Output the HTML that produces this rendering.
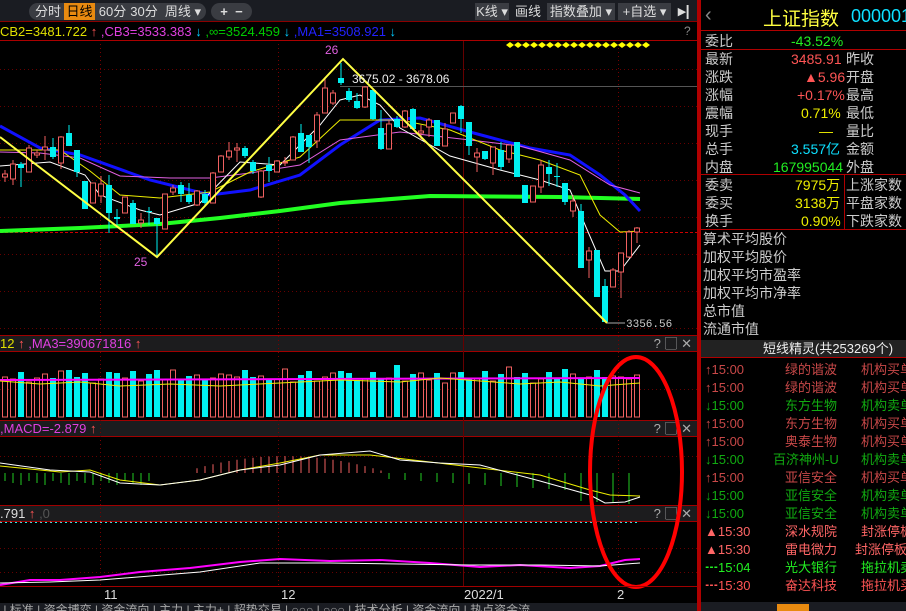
<!DOCTYPE html>
<html><head><meta charset="utf-8"><style>
*{margin:0;padding:0;box-sizing:border-box}
body{width:906px;height:611px;background:#000;overflow:hidden;position:relative;font-family:"Liberation Sans","Noto Sans CJK SC",sans-serif;color:#ccc}
.abs{position:absolute}
.tb{position:absolute;top:0;left:0;width:698px;height:22px;background:#1a1c22;border-bottom:1px solid #8b0000}
.pill{position:absolute;top:3px;height:17px;background:#3a3c42;border-radius:9px}
.t{position:absolute;top:3px;height:17px;font-size:13px;color:#ddd;line-height:17px;white-space:nowrap;text-align:center}
.rp{position:absolute;left:699px;top:0;width:207px;height:611px;border-left:2px solid #b00000;font-size:14px}
.row{position:absolute;left:4px;height:18px;line-height:18px;white-space:nowrap}
.hd{position:absolute;left:0;width:698px;height:17px;background:#1c1c1e;border-top:1px solid #a00000;border-bottom:1px solid #a00000;font-size:13px;line-height:16px}
</style></head><body>
<div class="tb">
 <div class="pill" style="left:29px;width:177px"></div>
 <div class="t" style="left:34px;width:28px">分时</div>
 <div class="t" style="left:64px;width:31px;background:#e88a10;color:#000">日线</div>
 <div class="t" style="left:97px;width:31px">60分</div>
 <div class="t" style="left:129px;width:30px">30分</div>
 <div class="t" style="left:161px;width:44px">周线 ▾</div>
 <div class="pill" style="left:211px;width:41px"></div>
 <div class="t" style="left:211px;width:41px;font-weight:bold">+&nbsp;&nbsp;−</div>
 <div class="t" style="left:475px;width:34px;background:#3a3c42">K线 ▾</div>
 <div class="t" style="left:514px;width:28px">画线</div>
 <div class="t" style="left:547px;width:68px;background:#3a3c42">指数叠加 ▾</div>
 <div class="t" style="left:618px;width:53px;background:#3a3c42">+自选 ▾</div>
 <div class="abs" style="left:678px;top:2px;font-size:15px;color:#ddd;font-weight:bold">▸|</div>
</div>
<div class="abs" style="left:0;top:24px;font-size:13px;white-space:nowrap"><span style="color:#e0e000">CB2=3481.722</span><span style="color:#f55"> ↑</span> <span style="color:#e040e0">,CB3=3533.383</span><span style="color:#0cf"> ↓</span> <span style="color:#0c0">,∞=3524.459</span><span style="color:#0cf"> ↓</span> <span style="color:#22f">,MA1=3508.921</span><span style="color:#0cf"> ↓</span></div>
<div class="abs" style="left:684px;top:24px;font-size:12px;color:#888">?</div>
<div class="hd" style="top:335px"><span style="color:#e0e000">12</span><span style="color:#f55"> ↑</span> <span style="color:#e040e0">,MA3=390671816</span><span style="color:#f55"> ↑</span><span style="position:absolute;right:6px;color:#aaa">? ▢ ✕</span></div>
<div class="hd" style="top:420px"><span style="color:#e040e0">,MACD=-2.879</span><span style="color:#f55"> ↑</span><span style="position:absolute;right:6px;color:#aaa">? ▢ ✕</span></div>
<div class="hd" style="top:505px"><span style="color:#ddd">.791</span><span style="color:#f55"> ↑</span> <span style="color:#555">,0</span><span style="position:absolute;right:6px;color:#aaa">? ▢ ✕</span></div>
<svg class="abs" style="left:0;top:0" width="698" height="611" id="sv"></svg>
<div class="abs" style="left:0;top:586px;width:698px;height:1px;background:#a00000"></div>
<div class="abs" style="left:104px;top:587px;font-size:13px;color:#ddd">11</div>
<div class="abs" style="left:281px;top:587px;font-size:13px;color:#ddd">12</div>
<div class="abs" style="left:464px;top:587px;font-size:13px;color:#ddd">2022/1</div>
<div class="abs" style="left:617px;top:587px;font-size:13px;color:#ddd">2</div>
<div class="abs" style="left:0;top:603px;width:698px;height:8px;background:#1a1c22;font-size:12px;color:#aaa;line-height:14px;white-space:nowrap;overflow:hidden">&nbsp;| 标准 | 资金博弈 | 资金流向 | 主力 | 主力+ | 超势交易 | ○○○ | ○○○ | 技术分析 | 资金流向 | 热点资金流</div>
<div class="abs" style="left:697px;top:0;width:2px;height:611px;background:#b00000"></div>
<div class="rp">
 <div class="abs" style="left:0;top:0;width:207px;height:31px;border-bottom:1px solid #b00000"></div>
 <div class="abs" style="left:4px;top:4px;font-size:20px;color:#888">‹</div>
 <div class="abs" style="left:62px;top:4px;font-size:19px;color:#ffff40">上证指数</div>
 <div class="abs" style="left:150px;top:6px;font-size:18px;color:#0de0ff">000001</div>
 <div class="row" style="top:32px;color:#ccc">委比</div><div class="row" style="top:32px;left:90px;color:#2e2">-43.52%</div>
 <div class="abs" style="left:0;top:49px;width:207px;height:1px;background:#b00000"></div>
 <div class="row" style="top:50px">最新</div><div class="row" style="top:50px;left:90px;color:#f55">3485.91</div><div class="row" style="top:50px;left:145px">昨收</div>
 <div class="row" style="top:68px">涨跌</div><div class="row" style="top:68px;left:103px;color:#f55">▲5.96</div><div class="row" style="top:68px;left:145px">开盘</div>
 <div class="row" style="top:86px">涨幅</div><div class="row" style="top:86px;left:96px;color:#f55">+0.17%</div><div class="row" style="top:86px;left:145px">最高</div>
 <div class="row" style="top:104px">震幅</div><div class="row" style="top:104px;left:100px;color:#ee0">0.71%</div><div class="row" style="top:104px;left:145px">最低</div>
 <div class="row" style="top:122px">现手</div><div class="row" style="top:122px;left:118px;color:#ee0">—</div><div class="row" style="top:122px;left:145px">量比</div>
 <div class="row" style="top:140px">总手</div><div class="row" style="top:140px;left:90px;color:#0de0ff">3.557亿</div><div class="row" style="top:140px;left:145px">金额</div>
 <div class="row" style="top:158px">内盘</div><div class="row" style="top:158px;left:72px;color:#2e2">167995044</div><div class="row" style="top:158px;left:145px">外盘</div>
 <div class="abs" style="left:0;top:174px;width:207px;height:1px;background:#b00000"></div>
 <div class="abs" style="left:143px;top:174px;width:1px;height:55px;background:#b00000"></div>
 <div class="row" style="top:176px">委卖</div><div class="row" style="top:176px;left:94px;color:#ee0">7975万</div><div class="row" style="top:176px;left:145px">上涨家数</div>
 <div class="row" style="top:194px">委买</div><div class="row" style="top:194px;left:94px;color:#ee0">3138万</div><div class="row" style="top:194px;left:145px">平盘家数</div>
 <div class="row" style="top:212px">换手</div><div class="row" style="top:212px;left:100px;color:#ee0">0.90%</div><div class="row" style="top:212px;left:145px">下跌家数</div>
 <div class="abs" style="left:0;top:229px;width:207px;height:1px;background:#b00000"></div>
 <div class="row" style="top:230px;left:2px">算术平均股价</div>
 <div class="row" style="top:248px;left:2px">加权平均股价</div>
 <div class="row" style="top:266px;left:2px">加权平均市盈率</div>
 <div class="row" style="top:284px;left:2px">加权平均市净率</div>
 <div class="row" style="top:302px;left:2px">总市值</div>
 <div class="row" style="top:320px;left:2px">流通市值</div>
 <div class="abs" style="left:0;top:340px;width:207px;height:18px;background:#222;border-bottom:1px solid #b00000;color:#eee;font-size:13px;line-height:18px;padding-left:62px">短线精灵(共253269个)</div>
 <div id="lst"></div>
 <div class="abs" style="left:0;top:602px;width:207px;height:9px;background:#1a1c22"></div>
 <div class="abs" style="left:76px;top:604px;width:32px;height:7px;background:#e88a10"></div>
</div>
<script>
var C=[[5,174,177,170,182,1],[13,164,179,160,185,1],[21,164,168,162,187,0],[29,148,172,145,172,1],[37,153,155,150,158,1],[45,147,150,136,160,1],[53,147,157,138,159,0],[61,137,163,136,169,1],[69,133,146,125,146,0],[77,150,172,150,177,0],[85,181,209,181,209,0],[93,183,203,183,203,1],[101,184,196,176,203,1],[109,185,213,175,233,0],[117,217,219,209,227,0],[125,197,213,197,213,1],[133,203,224,200,224,0],[141,220,223,213,228,1],[149,211,212,207,225,0],[157,218,224,218,258,0],[165,194,229,194,229,1],[173,188,192,185,195,1],[181,185,194,182,202,0],[189,195,202,183,204,0],[197,191,205,190,206,1],[205,194,203,190,205,0],[213,173,203,172,203,1],[221,156,172,155,172,1],[229,151,157,142,160,1],[237,148,150,143,162,1],[245,148,156,146,158,0],[253,162,171,160,174,0],[261,171,197,170,198,1],[269,165,171,157,182,0],[277,161,172,160,172,1],[285,162,163,157,166,1],[293,137,160,136,160,1],[301,133,152,124,152,0],[309,135,147,135,163,0],[317,115,141,112,148,1],[325,88,113,77,113,1],[333,93,103,90,105,1],[341,78,83,63,85,0],[349,91,100,88,102,0],[357,101,108,93,109,0],[365,87,107,86,108,1],[373,90,119,88,120,0],[381,128,149,110,150,0],[389,124,149,120,149,1],[397,119,127,116,128,0],[405,111,127,110,128,1],[413,109,129,108,130,0],[421,131,133,125,140,1],[429,120,127,118,137,1],[437,120,146,120,146,0],[445,129,146,123,146,1],[453,113,123,113,123,1],[461,106,119,105,133,0],[469,122,146,122,155,0],[477,153,157,148,172,1],[485,151,159,151,160,0],[493,147,163,147,175,1],[501,150,167,142,170,0],[509,145,159,145,163,1],[517,142,177,142,177,0],[525,185,203,185,203,0],[533,186,202,186,202,1],[541,165,187,160,193,1],[549,167,174,160,186,0],[557,176,177,163,187,0],[565,183,202,183,205,0],[573,201,211,195,217,1],[581,211,268,204,268,0],[589,251,260,247,278,1],[597,250,297,250,297,0],[605,286,322,279,322,0],[613,270,287,268,287,1],[621,253,272,253,298,1],[629,232,257,230,258,1],[637,228,232,227,243,1]];
var s='';
function L(x1,y1,x2,y2,c,w,d){s+='<line x1="'+x1+'" y1="'+y1+'" x2="'+x2+'" y2="'+y2+'" stroke="'+c+'" stroke-width="'+(w||1)+'"'+(d?' stroke-dasharray="'+d+'"':'')+'/>';}
function P(p,c,w){s+='<polyline fill="none" stroke="'+c+'" stroke-width="'+w+'" points="'+p+'"/>';}
[100,278,618].forEach(function(x){L(x+.5,40,x+.5,586,'#700','1','1,3');});
L(463.5,40,463.5,586,'#600',1);
for(var y=69;y<330;y+=37)L(0,y+.5,697,y+.5,'#600',1,'1,3');
L(0,40.5,697,40.5,'#a00',1);
L(0,232.5,697,232.5,'#c00',1,'3,2');
[389,456,548,572].forEach(function(y){L(0,y+.5,697,y+.5,'#600',1,'1,3');});
L(340,86.5,697,86.5,'#555',1);
P('0,231 80,228 160,224 220,218 280,211 340,203 430,196 560,197 640,199','#2f2',4);
P('0,126 40,148 80,155 150,180 210,195 250,190 300,175 340,145 380,120 420,118 470,132 530,148 570,155 600,175 625,195 640,211','#11f',3);
P('0,152 40,153 80,158 120,176 170,178 210,178 250,173 300,165 340,140 400,132 470,140 520,146 570,160 610,185 640,193','#e060e0',1);
P('0,150 60,150 90,171 120,195 160,198 210,192 250,172 300,157 340,120 400,120 450,130 500,150 540,160 580,175 600,215 620,232 640,231','#ee0',1);
P('0,166 50,162 85,175 100,195 140,210 160,215 200,203 240,162 280,165 320,125 340,100 360,95 380,105 400,128 450,156 500,170 540,180 570,190 595,248 605,271 620,271 640,245','#fff',1);
C.forEach(function(c){var x=c[0],col=c[5]?'#f06060':'#00f0f0';L(x,c[3],x,c[4],col,1);
 var t=Math.min(c[1],c[2]),h=Math.max(1,Math.abs(c[2]-c[1]));
 if(c[5])s+='<rect x="'+(x-2.5)+'" y="'+t+'" width="5" height="'+h+'" fill="#000" stroke="'+col+'"/>';
 else s+='<rect x="'+(x-3)+'" y="'+t+'" width="6" height="'+h+'" fill="'+col+'"/>';});
P('0,137 157,257 343,59 607,323','#ff4',2);
L(607,323,625,323,'#aaa',1);
s+='<text x="626" y="327" fill="#ccc" font-size="11" font-family="Liberation Mono">3356.56</text>';
s+='<text x="134" y="266" fill="#e060e0" font-size="12" font-family="Liberation Sans">25</text>';
s+='<text x="325" y="54" fill="#e060e0" font-size="12" font-family="Liberation Sans">26</text>';
s+='<text x="352" y="83" fill="#eee" font-size="12" font-family="Liberation Sans">3675.02 - 3678.06</text>';
for(var i=0;i<18;i++){var dx=510+i*8;s+='<polygon points="'+dx+',42 '+(dx+4)+',45 '+dx+',48 '+(dx-4)+',45" fill="#ff0"/>';}
C.forEach(function(c,i){var h=34+((i*37)%11)+(c[5]?0:3)+(i%7==0?6:0);var col=c[5]?'#f06060':'#00f0f0';
 if(c[5])s+='<rect x="'+(c[0]-2.5)+'" y="'+(417-h)+'" width="5" height="'+h+'" fill="#000" stroke="'+col+'"/>';
 else s+='<rect x="'+(c[0]-3)+'" y="'+(417-h)+'" width="6" height="'+h+'" fill="'+col+'"/>';});
P('0,380 640,378','#f0f',2);
P('0,381 40,384 80,382 120,386 170,384 220,386 280,383 340,380 400,382 440,378 480,381 520,384 560,382 600,386 640,383','#ee0',1);
for(var i=0;i<80;i++){var x=5+8*i;var v;
 if(i<22)v=-8-(i%3)*2;else if(i<48)v=((i-22)*(48-i))/10;else v=-6-(i-48)*0.5-(i>70?10:0);
 if(i>18&&i<24)continue; if(i>=48&&i%2==1)continue;
 var col=v>0?'#f06060':'#2c2';L(x,473,x,473-v,col,1);}
P('0,466 60,472 90,470 120,480 160,485 200,480 240,470 280,463 320,455 370,455 430,462 480,468 540,475 590,490 610,495 640,496','#ee0',1);
P('0,463 50,470 90,472 120,483 160,485 200,480 240,470 280,465 320,455 370,451 400,460 440,463 480,465 540,481 590,495 605,503 625,502 640,497','#fff',1);
L(0,522.5,640,522.5,'#2ee',1,'2,3');L(0,522,640,522,'#f55',1,'1,9');
P('0,585 30,580 60,580 100,577 140,572 190,568 240,562 280,559 330,561 380,560 430,563 480,567 520,565 570,568 600,566 625,560 640,559','#f0f',2);
P('0,583 50,582 100,580 150,576 200,572 260,563 330,563 400,564 470,565 540,565 600,566 640,563','#fff',1);
s+='<ellipse cx="636" cy="472" rx="46" ry="115" fill="none" stroke="#f00" stroke-width="4"/>';
document.getElementById('sv').innerHTML=s;
var R=[['↑','15:00','绿的谐波','机构买单','#c84848','#c84848'],['↑','15:00','绿的谐波','机构买单','#c84848','#c84848'],['↓','15:00','东方生物','机构卖单','#1a1','#1a1'],['↑','15:00','东方生物','机构买单','#c84848','#c84848'],['↑','15:00','奥泰生物','机构买单','#c84848','#c84848'],['↓','15:00','百济神州-U','机构卖单','#1a1','#1a1'],['↑','15:00','亚信安全','机构买单','#c84848','#c84848'],['↓','15:00','亚信安全','机构卖单','#1a1','#1a1'],['↓','15:00','亚信安全','机构卖单','#1a1','#1a1'],['▲','15:30','深水规院','封涨停板','#f66','#f66'],['▲','15:30','雷电微力','封涨停板','#f66','#f66'],['┅','15:04','光大银行','拖拉机卖','#2e2','#2e2'],['┅','15:30','奋达科技','拖拉机买','#f55','#f55']];
var h='';R.forEach(function(r,i){var t=361+i*18;h+='<div class="row" style="top:'+t+'px;left:4px;color:'+r[4]+';font-size:13px">'+r[0]+r[1]+'</div><div class="row" style="top:'+t+'px;left:'+(r[2].length>4?72:84)+'px;color:'+r[4]+';font-size:13px">'+r[2]+'</div><div class="row" style="top:'+t+'px;left:'+(i==10?154:160)+'px;color:'+r[5]+';font-size:13px">'+r[3]+'</div>';});
document.getElementById('lst').innerHTML=h;
</script>
</body></html>
